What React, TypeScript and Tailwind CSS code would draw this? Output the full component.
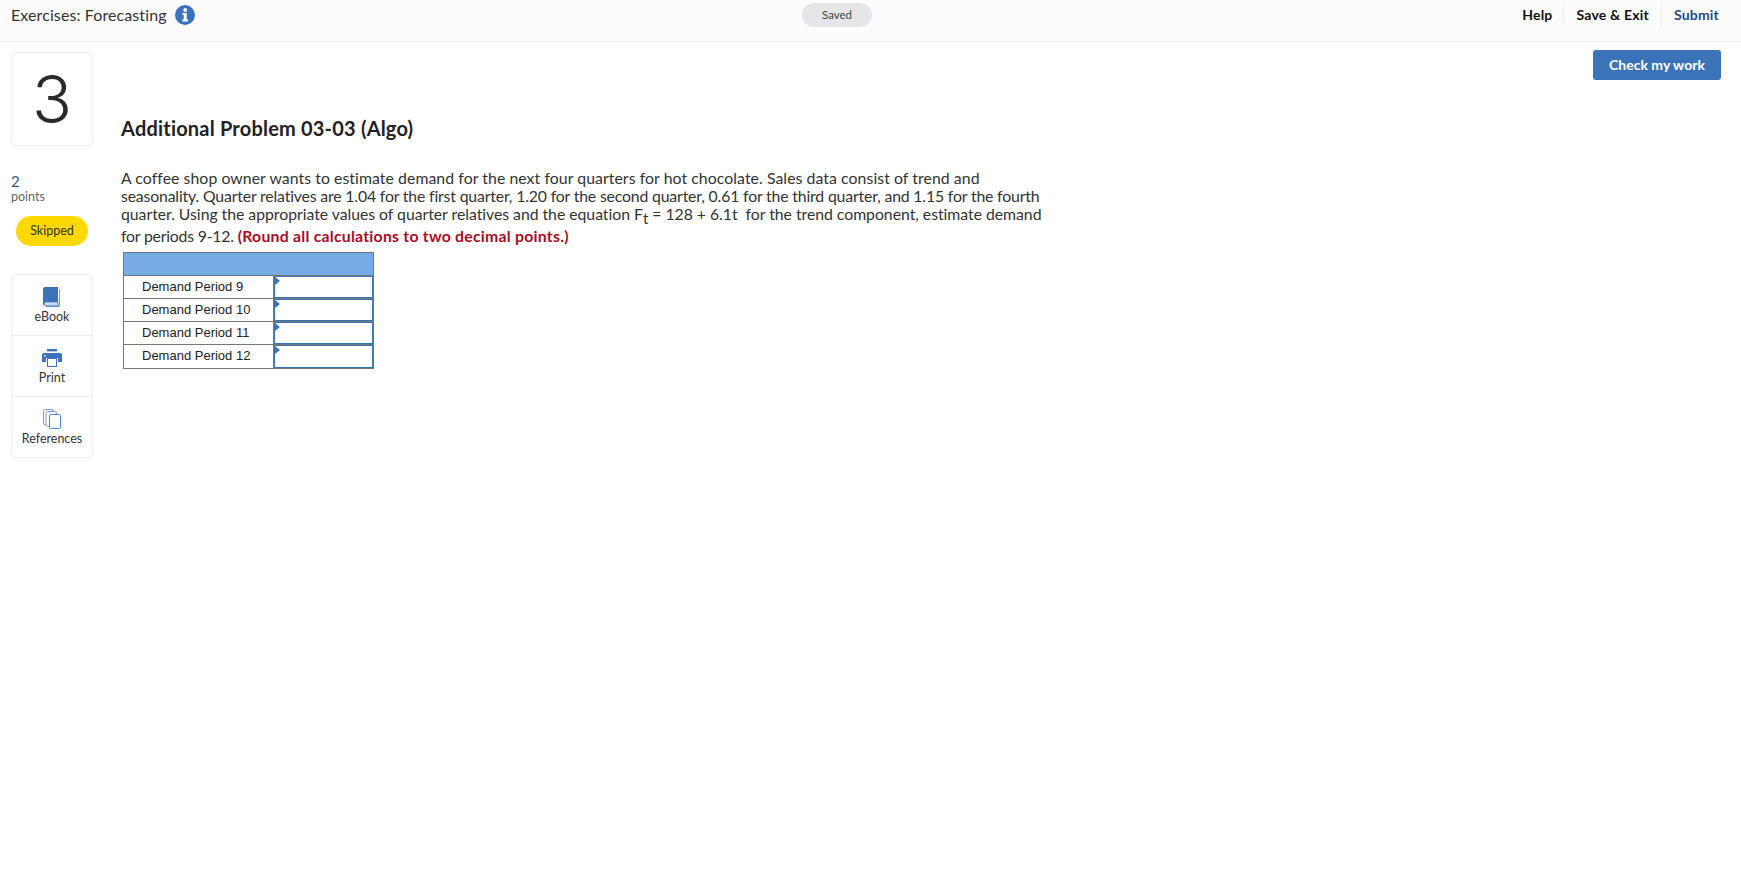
const sans = "font-['Lato','Open_Sans',sans-serif]";

function InfoIcon() {
  return (
    <svg width="20" height="20" viewBox="0 0 20 20" className="ml-2 shrink-0">
      <circle cx="10" cy="10" r="10" fill="#3b73b9" />
      <circle cx="10.2" cy="5" r="1.9" fill="#fff" />
      <path d="M7.5 8h4.2v6.6h1.2v1.9H7.4v-1.9h1.3V9.9H7.5z" fill="#fff" />
    </svg>
  );
}

function BookIcon() {
  return (
    <svg width="18" height="20" viewBox="0 0 18 20">
      <path d="M16.5 2v17.5H3" fill="none" stroke="#6ea6e4" strokeWidth="1" />
      <path d="M2 0h13v15H3a1.5 1.5 0 0 0-1.5 1.5V18H0V2a2 2 0 0 1 2-2z" fill="#3b73b9" />
      <path d="M1.6 16.2c0-.7.6-1.2 1.4-1.2h12v3.9H3c-.8 0-1.4-.6-1.4-1.3z" fill="#fff" stroke="#3b73b9" strokeWidth="1" />
      <rect x="3" y="16.5" width="11" height="1" fill="#8db7e6" />
    </svg>
  );
}

function PrintIcon() {
  return (
    <svg width="20" height="18" viewBox="0 0 20 18">
      <rect x="5" y="0" width="10" height="2.4" fill="#3b73b9" />
      <path d="M2 4h16a2 2 0 0 1 2 2v7h-4V9H4v4H0V6a2 2 0 0 1 2-2z" fill="#3b73b9" />
      <rect x="2" y="6" width="1.5" height="1.5" fill="#fff" />
      <rect x="5.5" y="9.5" width="9" height="8" fill="#fff" stroke="#3b73b9" />
    </svg>
  );
}

function RefIcon() {
  return (
    <svg width="18" height="20" viewBox="0 0 18 20" fill="#fff">
      <rect x="0.5" y="0.5" width="10" height="15" rx="1.5" stroke="#7f9ed8" />
      <rect x="3" y="2.5" width="10.5" height="15" rx="1.5" stroke="#7f9ed8" />
      <rect x="6.5" y="5.5" width="11" height="14" rx="1" stroke="#4a8ad6" />
    </svg>
  );
}

function Row({ label, last }: { label: string; last?: boolean }) {
  return (
    <div className={`flex h-[23px] ${last ? "" : "border-b border-[#777]"}`}>
      <div className="w-[150px] shrink-0 border-r border-[#777] pl-[18px] text-[13px] leading-[22px] text-[#222] font-['Liberation_Sans',sans-serif]">
        {label}
      </div>
      <div className="relative flex-1 border border-[#3b73b0] bg-white">
        <span className="absolute left-0 top-0 h-0 w-0 border-y-[4px] border-l-[5px] border-y-transparent border-l-[#3b73b9]" />
      </div>
    </div>
  );
}

function SideItem({ icon, label, last }: { icon: React.ReactNode; label: string; last?: boolean }) {
  return (
    <div className={`flex flex-col items-center pt-[12px] ${last ? "h-[60px]" : "h-[61px] border-b border-[#eee]"}`}>
      <div className="flex h-[20px] items-center">{icon}</div>
      <div className="mt-[2px] leading-[16px]">{label}</div>
    </div>
  );
}

export default function App() {
  return (
    <div className={`min-h-[890px] bg-white text-[#222] ${sans}`}>
      <header className="flex h-[42px] items-start justify-between border-b border-[#eee] bg-[#fcfcfc] pl-[11px] pr-[22px]">
        <div className="flex w-[500px] items-center pt-[3px] text-[16px] tracking-[0.1px] text-[#333]">
          Exercises: Forecasting
          <InfoIcon />
        </div>
        <div className="mt-[3px] flex h-[24px] w-[70px] items-center justify-center rounded-full bg-[#e6e5e7] text-[11.5px] text-[#444]">
          Saved
        </div>
        <div className="flex w-[556px] items-center justify-end pt-[3px] text-[14px] font-bold leading-[24px] tracking-[0.2px]">
          <span className="pr-[11px] text-[#111]">Help</span>
          <span className="border-l border-[#eee] pl-[12px] pr-[12px] text-[#111]">Save &amp; Exit</span>
          <span className="border-l border-[#eee] pl-[12px] text-[#1f4a85]">Submit</span>
        </div>
      </header>

      <div className="flex">
        <aside className="ml-[11px] w-[82px] shrink-0 pt-[10px]">
          <div className="flex h-[94px] items-center justify-center rounded border border-[#eee] font-['Inter',sans-serif] text-[66px] font-light text-[#2a2a2a]">
            3
          </div>
          <div className="mt-[26px] text-[15px] leading-[18px] text-[#2a5a96]">2</div>
          <div className="text-[12.5px] leading-[13px] text-[#666]">points</div>
          <div className="ml-[5px] mt-[13px] flex h-[30px] w-[72px] items-center justify-center rounded-full bg-[#ffd800] pt-[1px] text-[12.5px] text-[#333]">
            Skipped
          </div>
          <nav className="mt-[28px] rounded border border-[#eee] text-[12.5px] text-[#333]">
            <SideItem icon={<BookIcon />} label="eBook" />
            <SideItem icon={<PrintIcon />} label="Print" />
            <SideItem icon={<RefIcon />} label="References" last />
          </nav>
        </aside>

        <main className="ml-[28px] w-[960px] shrink-0 pt-[74px]">
          <h1 className="text-[20px] font-bold leading-[24px] tracking-[0.2px] text-[#222]">Additional Problem 03-03 (Algo)</h1>
          <div className="mt-[29px] whitespace-nowrap text-[15.8px] leading-[18px] text-[#333]">
            <p className="tracking-[0.07px]">
              A coffee shop owner wants to estimate demand for the next four quarters for hot chocolate. Sales data consist of trend and
            </p>
            <p className="tracking-[-0.16px]">
              seasonality. Quarter relatives are 1.04 for the first quarter, 1.20 for the second quarter, 0.61 for the third quarter, and 1.15 for the fourth
            </p>
            <p className="tracking-[-0.03px]">
              quarter. Using the appropriate values of quarter relatives and the equation F<sub className="text-[15px]">t</sub> = 128 + 6.1t&nbsp; for the trend component, estimate demand
            </p>
            <p className="mt-[4px]">
              <span className="tracking-[-0.2px]">for periods 9-12. </span>
              <strong className="tracking-[0.24px] text-[#a80d1f]">(Round all calculations to two decimal points.)</strong>
            </p>
          </div>
          <div className="ml-[2px] mt-[7px] w-[251px] border border-[#777]">
            <div className="h-[23px] border-b border-[#777] bg-[#77abe6]" />
            <Row label="Demand Period 9" />
            <Row label="Demand Period 10" />
            <Row label="Demand Period 11" />
            <Row label="Demand Period 12" last />
          </div>
        </main>

        <div className="ml-auto mr-[20px] mt-[8px] flex h-[30px] w-[128px] items-center justify-center rounded-[3px] bg-[#3b73b9] pb-[2px] text-[14px] font-bold text-white">
          Check my work
        </div>
      </div>
    </div>
  );
}
